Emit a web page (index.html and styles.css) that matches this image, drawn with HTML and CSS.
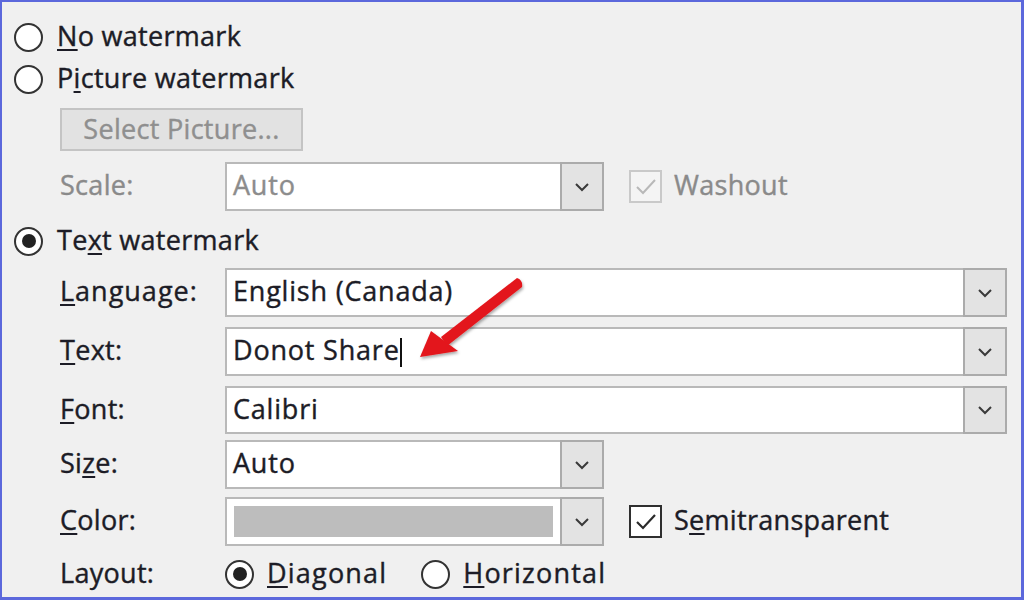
FILE: index.html
```html
<!DOCTYPE html>
<html>
<head>
<meta charset="utf-8">
<link rel="stylesheet" href="styles.css">
</head>
<body>
<div class="frame">
  <div class="radio-row r1">
    <span class="radio"></span><span class="rlabel"><u>N</u>o watermark</span>
  </div>
  <div class="radio-row">
    <span class="radio"></span><span class="rlabel">P<u>i</u>cture watermark</span>
  </div>
  <div class="indent">
    <div class="btn">Select Picture...</div>
    <div class="field-row scale-row">
      <span class="lbl dis">Scale:</span>
      <div class="combo short dis">
        <span class="cval">Auto</span>
        <span class="drop"><svg width="16" height="10" viewBox="0 0 16 10"><path d="M2 2 L8 8 L14 2" fill="none" stroke="#3a3a3a" stroke-width="2"/></svg></span>
      </div>
      <span class="check dis"><svg width="26" height="26" viewBox="0 0 26 26"><path d="M4 13 L10 19 L22 6" fill="none" stroke="#b8b8b8" stroke-width="2"/></svg></span>
      <span class="clabel dis">Washout</span>
    </div>
  </div>
  <div class="radio-row r3">
    <span class="radio on"></span><span class="rlabel">Te<u>x</u>t watermark</span>
  </div>
  <div class="indent">
    <div class="field-row lang-row">
      <span class="lbl wide"><u>L</u>anguage:</span>
      <div class="combo">
        <span class="cval">English (Canada)</span>
        <span class="drop"><svg width="16" height="10" viewBox="0 0 16 10"><path d="M2 2 L8 8 L14 2" fill="none" stroke="#3a3a3a" stroke-width="2"/></svg></span>
      </div>
    </div>
    <div class="field-row gap10">
      <span class="lbl"><u>T</u>ext:</span>
      <div class="combo">
        <span class="cval">Donot Share<span class="caret"></span></span>
        <span class="drop"><svg width="16" height="10" viewBox="0 0 16 10"><path d="M2 2 L8 8 L14 2" fill="none" stroke="#3a3a3a" stroke-width="2"/></svg></span>
      </div>
    </div>
    <div class="field-row gap10 font-row">
      <span class="lbl"><u>F</u>ont:</span>
      <div class="combo">
        <span class="cval">Calibri</span>
        <span class="drop"><svg width="16" height="10" viewBox="0 0 16 10"><path d="M2 2 L8 8 L14 2" fill="none" stroke="#3a3a3a" stroke-width="2"/></svg></span>
      </div>
    </div>
    <div class="field-row gap6">
      <span class="lbl">Si<u>z</u>e:</span>
      <div class="combo short">
        <span class="cval">Auto</span>
        <span class="drop"><svg width="16" height="10" viewBox="0 0 16 10"><path d="M2 2 L8 8 L14 2" fill="none" stroke="#3a3a3a" stroke-width="2"/></svg></span>
      </div>
    </div>
    <div class="field-row gap8">
      <span class="lbl"><u>C</u>olor:</span>
      <div class="combo short">
        <span class="swatch"></span>
        <span class="drop"><svg width="16" height="10" viewBox="0 0 16 10"><path d="M2 2 L8 8 L14 2" fill="none" stroke="#3a3a3a" stroke-width="2"/></svg></span>
      </div>
      <span class="check"><svg width="26" height="26" viewBox="0 0 26 26"><path d="M4 13 L10 19 L22 6" fill="none" stroke="#2a2a2a" stroke-width="2.2"/></svg></span>
      <span class="clabel">S<u>e</u>mitransparent</span>
    </div>
    <div class="field-row layout-row">
      <span class="lbl">Layout:</span>
      <span class="radio on small"></span><span class="rlabel2"><u>D</u>iagonal</span>
      <span class="radio small hz"></span><span class="rlabel2"><u>H</u>orizontal</span>
    </div>
  </div>
  <svg class="arrow" width="130" height="100" viewBox="410 270 130 100">
    <defs>
      <filter id="sh" x="-20%" y="-20%" width="140%" height="140%">
        <feDropShadow dx="1" dy="2" stdDeviation="1.5" flood-color="#000" flood-opacity="0.35"/>
      </filter>
    </defs>
    <g filter="url(#sh)" fill="#e3161b">
      <path d="M517 278 Q523 280 522 287 L447 346 L441 337 Z"/>
      <polygon points="420,357 431,331 458,351"/>
    </g>
  </svg>
</div>
</body>
</html>
```

FILE: styles.css
```css
* { box-sizing: border-box; }
html, body { margin: 0; padding: 0; }
body {
  width: 1024px;
  height: 600px;
  overflow: hidden;
  font-family: "Open Sans", "Noto Sans", "Liberation Sans", sans-serif;
  font-size: 27px;
  font-weight: 400;
  letter-spacing: 0.3px;
  color: #1c1c26;
  -webkit-text-stroke: 0.4px currentColor;
}
.frame {
  position: relative;
  width: 1024px;
  height: 600px;
  background: #f0f0f0;
  border-style: solid;
  border-color: #5c68dc;
  border-width: 2px 3px 3px 2px;
  padding: 14px 0 0 12px;
}
u { text-decoration: underline; text-decoration-thickness: 2px; text-underline-offset: 3px; }
.radio-row {
  display: flex;
  align-items: center;
  height: 42px;
}
.radio {
  width: 29px;
  height: 29px;
  border: 2px solid #333;
  border-radius: 50%;
  background: #fff;
  flex: none;
  position: relative;
}
.radio.on::after {
  content: "";
  position: absolute;
  left: 5.5px; top: 5.5px;
  width: 14px; height: 14px;
  border-radius: 50%;
  background: #222;
}
.rlabel { margin-left: 14px; line-height: 1; padding-bottom: 4px; }
.r3 { margin-top: 9px; }
.indent { margin-left: 46px; }
.btn {
  margin-top: 8px;
  width: 243px;
  height: 43px;
  border: 2px solid #c4c4c4;
  background: #e2e2e2;
  color: #8f8f8f;
  display: flex;
  align-items: center;
  justify-content: center;
  padding-bottom: 3px;
}
.field-row {
  display: flex;
  align-items: center;
}
.scale-row { margin-top: 11px; }
.lang-row { margin-top: 6px; }
.gap10 { margin-top: 10px; }
.font-row { margin-top: 10px; }
.gap6 { margin-top: 6px; }
.gap8 { margin-top: 8px; }
.lbl {
  width: 165px;
  flex: none;
  padding-bottom: 4px;
}
.lbl.wide { letter-spacing: 1px; }
.lbl.dis, .clabel.dis { color: #8a8a8a; }
.combo {
  width: 782px;
  height: 49px;
  border: 2px solid #b9b9b9;
  background: #fff;
  display: flex;
  align-items: stretch;
  flex: none;
}
.font-row .combo { height: 48px; }
.combo.short { width: 379px; }
.cval {
  flex: 1;
  display: flex;
  align-items: center;
  padding-left: 6px;
  padding-bottom: 4px;
  letter-spacing: 0.8px;
}
.combo.dis .cval { color: #8c8c8c; }
.caret {
  display: inline-block;
  width: 2px;
  height: 29px;
  background: #111;
  margin-left: 0;
  margin-top: 5px;
}
.drop {
  width: 44px;
  flex: none;
  margin: -2px -2px -2px 0;
  border: 2px solid #ababab;
  background: #e3e3e3;
  display: flex;
  align-items: center;
  justify-content: center;
}
.swatch {
  flex: 1;
  margin: 7px 7px 7px 7px;
  background: #bdbdbd;
}
.check {
  width: 33px;
  height: 33px;
  border: 2px solid #2f2f2f;
  background: #fff;
  margin-left: 25px;
  display: flex;
  align-items: center;
  justify-content: center;
  flex: none;
}
.check.dis { border-color: #c9c9c9; background: #f4f4f4; }
.clabel { margin-left: 12px; padding-bottom: 4px; }
.layout-row { margin-top: 12px; height: 32px; }
.radio.small { width: 29px; height: 29px; }
.rlabel2 { margin-left: 13px; padding-bottom: 4px; letter-spacing: 1.2px; }
.radio.hz { margin-left: 34px; }
.arrow {
  position: absolute;
  left: 408px;
  top: 268px;
}
```
